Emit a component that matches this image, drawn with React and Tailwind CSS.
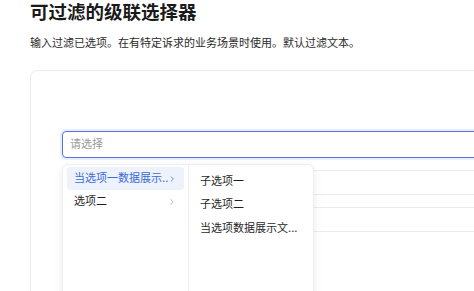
import { ChevronRight } from "lucide-react"

const parents = [
  { id: "a", label: "当选项一数据展示..", active: true },
  { id: "b", label: "选项二" },
]
const children = ["子选项一", "子选项二", "当选项数据展示文..."]

export default function App() {
  return (
    <div className="relative w-[474px] h-[291px] overflow-hidden bg-white font-['Inter','Noto_Sans_CJK_SC',sans-serif] text-[#1f1f1f]">
      <div className="pl-[30px] pt-[1px]">
        <h1 className="text-[18.5px] leading-[23px] font-bold text-[#1a1a1a]">可过滤的级联选择器</h1>
        <p className="mt-[11px] text-[11px] leading-[16px] text-[#2a2a2a]">输入过滤已选项。在有特定诉求的业务场景时使用。默认过滤文本。</p>
      </div>

      {/* demo card */}
      <div className="ml-[30px] mt-[19px] w-[480px] h-[260px] rounded-lg border border-[#ececec] pl-[31px] pt-[60px]">
        <div className="h-[27px] w-[430px] rounded-[4px] border border-[#5577d4] ring-2 ring-[#e6edfc] flex items-center px-[7px]">
          <span className="text-[11px] text-[#9a9a9a]">请选择</span>
        </div>
        <div className="mt-[12px] h-[25px] w-[430px] border border-[#ebebeb] rounded-[3px]" />
        <div className="mt-[12px] h-[25px] w-[430px] border border-[#ebebeb] rounded-[3px]" />
      </div>

      {/* cascader popup */}
      <div className="absolute left-[62px] top-[164px] w-[252px] h-[140px] bg-white rounded-[6px] border border-[#eeeeee] shadow-[0_3px_10px_rgba(0,0,0,0.08)] flex">
        <div className="w-[126px] border-r border-[#eeeeee] p-[4px] pt-[2px]">
          {parents.map(p => (
            <div key={p.id}
              className={p.active
                ? "h-[23px] flex items-center justify-between px-[7px] rounded-[3px] bg-[#eef2fd] text-[#3a6bd6]"
                : "h-[23px] flex items-center justify-between px-[7px] rounded-[3px] text-[#1f1f1f]"}>
              <span className="text-[11px] whitespace-nowrap">{p.label}</span>
              <ChevronRight className={p.active ? "w-[10px] h-[10px] text-[#3a6bd6]" : "w-[10px] h-[10px] text-[#aaa]"} strokeWidth={2} />
            </div>
          ))}
        </div>
        <div className="flex-1 p-[4px] pt-[4px]">
          {children.map(c => (
            <div key={c} className="h-[23.5px] flex items-center px-[7px] text-[11px] whitespace-nowrap">{c}</div>
          ))}
        </div>
      </div>
    </div>
  )
}
